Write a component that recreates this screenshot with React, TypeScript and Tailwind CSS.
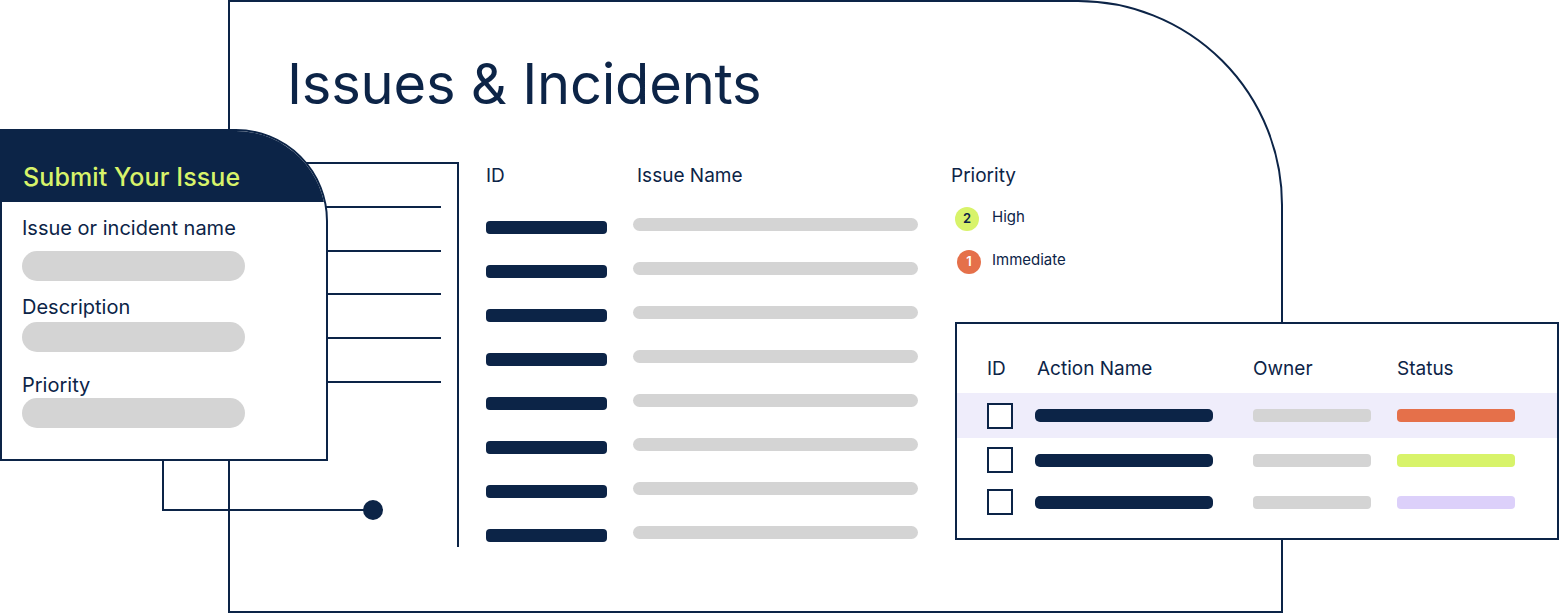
import React from "react";

const NAVY = "#0c2447";

const rows = [0, 1, 2, 3, 4, 5, 6, 7];

function Connectors() {
  return (
    <svg
      className="absolute left-0 top-0 pointer-events-none"
      width={1559}
      height={613}
      viewBox="0 0 1559 613"
    >
      <g stroke={NAVY} strokeWidth={2} fill="none">
        <path d="M300 163 H458 V547" />
        <path d="M326 207 H441" />
        <path d="M326 251 H441" />
        <path d="M326 294 H441" />
        <path d="M326 338 H441" />
        <path d="M326 382 H441" />
        <path d="M163 460 V510 H373" />
      </g>
      <circle cx={373} cy={510} r={10} fill={NAVY} />
    </svg>
  );
}

function MainWindow() {
  return (
    <div className="absolute left-[228px] top-0 w-[1055px] h-[613px] border-2 border-[#0c2447] rounded-tr-[205px] bg-white">
      <h1 className="pl-[57px] pt-[49px] text-[56px] leading-[66px] font-normal tracking-[-0.2px] text-[#0c2447]">
        Issues &amp; Incidents
      </h1>
      <div className="ml-[256px] mt-[44px] flex">
        <div className="w-[147px] flex flex-col">
          <div className="h-[30px] flex items-center text-[19px] text-[#0c2447]">ID</div>
          <div className="flex flex-col pt-[14px]">
            {rows.map((r) => (
              <div key={r} className="h-[44px] flex items-center">
                <div className="w-[121px] h-[13px] rounded-[4px] bg-[#0c2447]" />
              </div>
            ))}
          </div>
        </div>
        <div className="w-[318px] flex flex-col">
          <div className="h-[30px] flex items-center pl-[4px] text-[19px] text-[#0c2447]">Issue Name</div>
          <div className="flex flex-col pt-[14px]">
            {rows.map((r) => (
              <div key={r} className="h-[44px] flex items-center">
                <div className="w-[285px] h-[13px] -mt-[6px] rounded-full bg-[#d4d4d4]" />
              </div>
            ))}
          </div>
        </div>
        <div className="flex flex-col">
          <div className="h-[30px] flex items-center text-[19px] text-[#0c2447]">Priority</div>
          <div className="flex flex-col pt-[16px] gap-[19px] pl-[4px]">
            <div className="flex items-center gap-[13px]">
              <span className="w-[24px] h-[24px] rounded-full bg-[#d8f36a] flex items-center justify-center text-[13px] font-semibold text-[#0c2447]">
                2
              </span>
              <span className="text-[15px] text-[#0c2447] -mt-[3px]">High</span>
            </div>
            <div className="flex items-center gap-[11px] pl-[2px]">
              <span className="w-[24px] h-[24px] rounded-full bg-[#e5704a] flex items-center justify-center text-[13px] font-semibold text-white">
                1
              </span>
              <span className="text-[15px] text-[#0c2447] -mt-[3px]">Immediate</span>
            </div>
          </div>
        </div>
      </div>
    </div>
  );
}

function SubmitCard() {
  return (
    <div className="absolute left-0 top-[129px] w-[328px] h-[332px] border-2 border-[#0c2447] rounded-tr-[92px] bg-white overflow-hidden">
      <div className="h-[71px] bg-[#0c2447] flex items-center pl-[21px] pt-[22px]">
        <span className="text-[25px] text-[#d8f36a] font-medium tracking-[0.1px]">Submit Your Issue</span>
      </div>
      <div className="pl-[20px] pt-[13px] flex flex-col text-[#0c2447]">
        <span className="text-[20px] leading-[26px]">Issue or incident name</span>
        <div className="mt-[10px] w-[223px] h-[30px] rounded-full bg-[#d4d4d4]" />
        <span className="mt-[13px] text-[20px] leading-[26px]">Description</span>
        <div className="mt-[2px] w-[223px] h-[30px] rounded-full bg-[#d4d4d4]" />
        <span className="mt-[20px] text-[20px] leading-[26px]">Priority</span>
        <div className="mt-0 w-[223px] h-[30px] rounded-full bg-[#d4d4d4]" />
      </div>
    </div>
  );
}

function ActionCard() {
  const statuses = ["bg-[#e5704a]", "bg-[#d8f36a]", "bg-[#dcd0fa]"];
  return (
    <div className="absolute left-[955px] top-[322px] w-[604px] h-[218px] border-2 border-[#0c2447] bg-white">
      <div className="h-[69px] flex items-end pb-[10px] text-[19px] text-[#0c2447]">
        <span className="w-[50px] pl-[30px] box-content">ID</span>
        <span className="w-[216px]">Action Name</span>
        <span className="w-[144px]">Owner</span>
        <span>Status</span>
      </div>
      {statuses.map((s, i) => (
        <div
          key={i}
          className={"flex items-center " + (i === 0 ? "h-[45px] bg-[#efedfb]" : i === 1 ? "h-[44px]" : "h-[40px]")}
        >
          <div className="ml-[30px] w-[26px] h-[26px] border-2 border-[#0c2447] bg-white" />
          <div className="ml-[22px] w-[178px] h-[13px] rounded-[5px] bg-[#0c2447]" />
          <div className="ml-[40px] w-[118px] h-[13px] rounded-[4px] bg-[#d4d4d4]" />
          <div className={"ml-[26px] w-[118px] h-[13px] rounded-[4px] " + s} />
        </div>
      ))}
    </div>
  );
}

export default function App() {
  return (
    <div
      className="relative w-[1559px] h-[613px] bg-white overflow-hidden"
      style={{ fontFamily: "Inter, 'Noto Sans', sans-serif" }}
    >
      <MainWindow />
      <Connectors />
      <SubmitCard />
      <ActionCard />
    </div>
  );
}
